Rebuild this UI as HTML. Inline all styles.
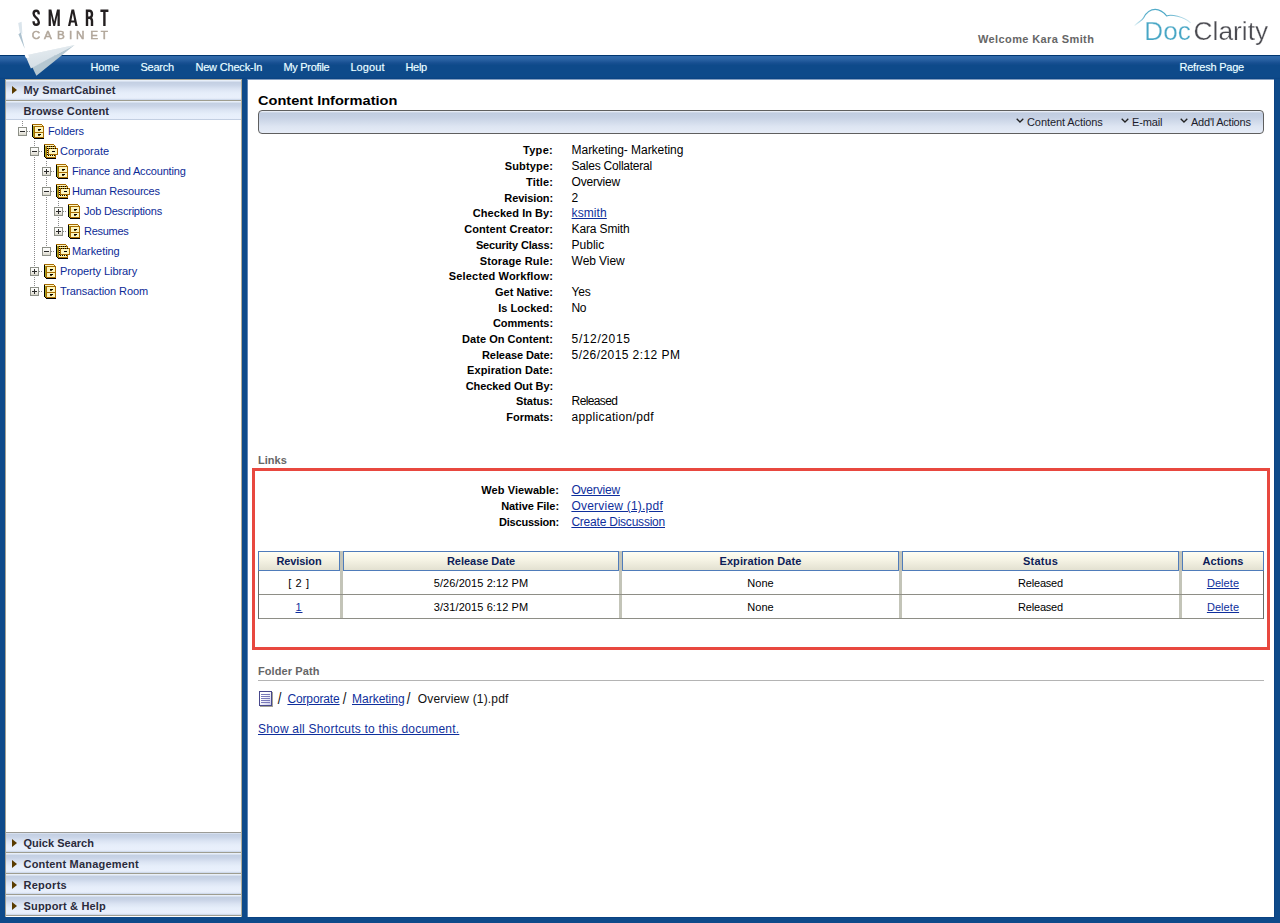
<!DOCTYPE html>
<html>
<head>
<meta charset="utf-8">
<title>Content Information</title>
<style>
*{box-sizing:border-box;margin:0;padding:0}
html,body{width:1280px;height:923px;overflow:hidden;background:#0e4a8a;font-family:"Liberation Sans",sans-serif;font-size:11px;color:#000}
a{color:#0f2f9c;text-decoration:underline}
.abs{position:absolute}
span{white-space:nowrap}
#top{position:absolute;left:0;top:0;width:1280px;height:55px;background:#fff}
#nav{position:absolute;left:0;top:55px;width:1280px;height:24px;background:linear-gradient(#003670 0,#003670 1px,#326bab 1px,#2c65a5 4px,#174f91 8px,#0e4a8a 10.5px,#0e4a8a 22px,#0a4383 24px)}
#nav b{position:absolute;top:5px;font-weight:normal;color:#f0ffff;font-size:11px;line-height:14px;white-space:nowrap;text-shadow:0 0 1px rgba(150,220,255,.6)}
#welcome{position:absolute;left:978px;top:32px;font-weight:bold;font-size:11px;line-height:14px;color:#666;white-space:nowrap}
/* sidebar */
#side{position:absolute;left:5px;top:79px;width:237px;height:838px;background:#fff;border-left:1px solid #a3a193;border-top:1px solid #a9a695;border-right:1px solid #b0ab98}
.hd{position:absolute;left:0;width:235px;height:21px;border-top:1px solid #e8eff9;border-bottom:1px solid #9e9d90;background:linear-gradient(#e0e8f5 0,#c4d0e3 1.5px,#c9d4e7 4px,#dbe4f3 8px,#e6eefa 12px,#e9f0fc 16px,#e7eefa 17.4px,#d0dbed 18px,#d0dbed 19px);font-weight:bold;font-size:11px;line-height:18px;color:#2b2b3b;padding-left:17.5px;white-space:nowrap}
.hd i{position:absolute;left:6px;top:4.7px;width:0;height:0;border-left:5.3px solid #5a3c00;border-top:4.8px solid transparent;border-bottom:4.8px solid transparent}
/* tree */
#tree{position:absolute;left:0;top:41px;width:236px;height:200px}
.tr{position:absolute;left:0;height:20px;width:236px}
.tr .bx{position:absolute;top:5px;width:9px;height:9px;border:1px solid #8d9088;background:linear-gradient(#ffffff,#f4f3ee 50%,#d9d7cb)}
.tr .bx:before{content:"";position:absolute;left:1px;top:3px;width:5px;height:1px;background:#2a2a2a}
.tr .bx.p:after{content:"";position:absolute;left:3px;top:1px;width:1px;height:5px;background:#2a2a2a}
.tr .hl{position:absolute;top:9px;width:3px;height:1px;background:repeating-linear-gradient(90deg,#8a8a8a 0,#8a8a8a 1px,#fff 1px,#fff 2px)}
.tr svg{position:absolute;top:2px}
.tr .tx{position:absolute;top:2px;font-size:11px;line-height:14px;color:#0c2a96;white-space:nowrap}
.vl{position:absolute;width:1px;background:repeating-linear-gradient(180deg,#8a8a8a 0,#8a8a8a 1px,#fff 1px,#fff 2px)}
/* content */
#main{position:absolute;left:248px;top:79px;width:1026px;height:838px;background:#fff;border-top:1px solid #869fc0;box-shadow:-1px 0 0 #5f86b4,1px 1px 0 #0b4282}
h1{position:absolute;left:10px;top:13px;font-size:13px;line-height:16px;font-weight:bold;color:#000;white-space:nowrap}
#tb{position:absolute;left:10px;top:30px;width:1006px;height:24px;border:1px solid #5f5f5f;border-radius:4px;background:linear-gradient(#f4f7fc 0,#c0cce0 2px,#c6d1e4 30%,#dde5f2 70%,#e6ecf7 100%)}
#tb b{position:absolute;top:4px;font-weight:normal;font-size:11px;line-height:14px;color:#1c1c2c;white-space:nowrap}
#tb svg{position:absolute;top:7px}
/* info rows */
.ir{position:absolute;left:0;height:16px;line-height:16px;white-space:nowrap}
.ir .l{display:inline-block;width:305px;text-align:right;font-weight:bold;font-size:11px;color:#000;vertical-align:baseline}
.ir .v{margin-left:18.6px;font-size:12px;color:#000}
.sec{position:absolute;left:10px;font-weight:bold;font-size:11px;line-height:14px;color:#666}
#red{position:absolute;left:4px;top:388px;width:1018px;height:182px;border:3px solid #e8483f}
/* rev table */
#rev{position:absolute;left:10px;top:471px;width:1006px;height:68px;background:#fff}
#rev .th{position:absolute;top:0;height:20px;border:1px solid #4f7cba;background:linear-gradient(#fffef3 0,#f5f3e4 45%,#e3e1d1 100%);font-size:11px;line-height:18px;font-weight:bold;color:#0c1c58;text-align:center}
#rev .vs{position:absolute;top:0;width:3px;height:68px;background:#c3c4b8}
#rev .hs{position:absolute;left:0;width:1006px;height:1px;background:#8e8e86}
#rev .td{position:absolute;height:23px;font-size:11px;line-height:23px;text-align:center;color:#000}
</style>
</head>
<body>
<div id="top">
<svg class="abs" style="left:0;top:0;will-change:transform" width="130" height="55" viewBox="0 0 130 55">
<g fill="none" stroke="#231f20" stroke-width="2.4">
<path d="M38.7 14.4 C38.8 11.7 37.9 10.7 36.1 10.7 C34.4 10.7 33.6 11.7 33.6 13.5 C33.6 15.6 34.9 16.6 36.2 17.7 C37.8 19 38.8 20.1 38.8 22.2 C38.8 24 37.9 24.8 36.2 24.8 C34.4 24.8 33.5 23.9 33.6 21.2"/>
<path d="M87 26 V9.5 M87 10.7 H89.3 C91.2 10.7 92 11.7 92 14.2 C92 16.8 91.2 17.8 89.3 17.8 H87 M89.8 17.8 C91.5 18.2 92 19.2 92 21 V26"/>
<path d="M100.4 10.7 H108.4 M104.4 10.7 V26"/>
</g>
<g fill="#231f20" fill-rule="evenodd">
<path d="M48.6 26 V9.5 H51.4 L54.2 21.5 L57 9.5 H59.8 V26 H57.5 V15 L55.1 26 H53.3 L50.9 15 V26 Z"/>
<path d="M68 26 L71.5 9.5 H74.1 L77.6 26 H75.3 L74.6 22.6 H71 L70.3 26 Z M72.8 13.2 L71.4 20.6 H74.2 Z"/>
</g>
<text font-family="Liberation Sans" font-size="11.7" fill="#b1a69a" y="38.7" x="31.8 44.1 56.9 68.9 75.9 90.2 100.8" stroke="#b1a69a" stroke-width="0.5">CABINET</text>
<polygon points="18.2,22.9 21.6,21.7 22.4,34 19.8,32.8" fill="#dbe5ec"/>
<polygon points="18.4,34.2 20.8,32.6 24.8,48.8" fill="#adc2cf"/>
<polygon points="74.6,45 25.3,55.4 30.9,68.4" fill="#e4ebef"/>
</svg>
<svg class="abs" style="left:1125px;top:0;will-change:transform" width="155" height="55" viewBox="1125 0 155 55">
<defs><linearGradient id="cg" x1="0" x2="1" y1="0" y2="0"><stop offset="0" stop-color="#5fb4cf" stop-opacity="0.15"/><stop offset="0.18" stop-color="#4aa7c6" stop-opacity="0.9"/><stop offset="0.55" stop-color="#4aa7c6" stop-opacity="1"/><stop offset="1" stop-color="#4aa7c6" stop-opacity="0.25"/></linearGradient></defs>
<path d="M1134.5 25.6 C1139 21.5 1142 20.8 1143.6 17.8 C1146.5 12.2 1151 9.4 1155.3 9.4 C1160 9.5 1163.8 12.5 1166.6 15.9 C1169.8 14.8 1173 15.2 1177.5 16.2 C1182.5 17.4 1187 19.5 1190.6 22.8" fill="none" stroke="url(#cg)" stroke-width="1.1"/>
<text font-family="Liberation Sans" font-size="25.2" y="40.1" x="1144.3" fill="#47a6c5" stroke="#fff" stroke-width="0.25" textLength="46.4" lengthAdjust="spacingAndGlyphs">Doc</text>
<text font-family="Liberation Sans" font-size="25.2" y="40.1" x="1193.6" fill="#4b4b51" stroke="#fff" stroke-width="0.25" textLength="74.6" lengthAdjust="spacingAndGlyphs">Clarity</text>
</svg>

</div>
<div id="nav">
<b style="left:90.4px"><span style="letter-spacing:-0.14px">Home</span></b>
<b style="left:140.4px"><span style="letter-spacing:-0.21px">Search</span></b>
<b style="left:195.4px"><span style="letter-spacing:-0.18px">New Check-In</span></b>
<b style="left:283.4px"><span style="letter-spacing:-0.29px">My Profile</span></b>
<b style="left:350.4px"><span style="letter-spacing:0.09px">Logout</span></b>
<b style="left:405.4px"><span style="letter-spacing:-0.26px">Help</span></b>
<b style="left:1179.5px"><span style="letter-spacing:-0.23px">Refresh Page</span></b>
</div>
<svg class="abs" style="left:0;top:40px" width="100" height="40" viewBox="0 40 100 40">
<defs><linearGradient id="pg" x1="0" y1="0" x2="0.35" y2="1"><stop offset="0" stop-color="#e9eff3"/><stop offset="1" stop-color="#d3dde4"/></linearGradient></defs>
<polygon points="74.6,45 32.2,67.0 36.4,75.7" fill="#b5c7d1"/>
<polygon points="74.6,45 25.3,55.4 30.9,68.4" fill="url(#pg)"/>
<polygon points="24.6,55 28.2,55 29.2,57.6 26,58" fill="#fff"/>
</svg>

<div id="welcome"><span style="letter-spacing:0.39px">Welcome Kara Smith</span></div>

<div id="side">
<div class="hd" style="top:0"><i></i><span style="letter-spacing:0.14px">My SmartCabinet</span></div>
<div class="hd" style="top:21px;height:19px;border-bottom-color:#c3cfe2;line-height:19px"><span style="letter-spacing:0.08px">Browse Content</span></div>
<div id="tree">
<div class="vl" style="left:16px;top:0px;height:6px"></div><div class="vl" style="left:28px;top:20px;height:6px"></div><div class="vl" style="left:28px;top:36px;height:110px"></div><div class="vl" style="left:28px;top:156px;height:10px"></div><div class="vl" style="left:40px;top:40px;height:6px"></div><div class="vl" style="left:40px;top:56px;height:10px"></div><div class="vl" style="left:40px;top:76px;height:50px"></div><div class="vl" style="left:52px;top:80px;height:6px"></div><div class="vl" style="left:52px;top:96px;height:10px"></div>
<div class="tr" style="top:1px"><div class="bx" style="left:12px"></div><div class="hl" style="left:21px"></div><svg style="left:26px" width="12" height="15" viewBox="0 0 12 15" shape-rendering="crispEdges"><rect x="0" y="0" width="10" height="1" fill="#a86c00"/><rect x="1" y="1" width="9" height="1" fill="#fdf6c0"/><rect x="10" y="1" width="1" height="1" fill="#a86c00"/><rect x="0" y="1" width="1" height="12" fill="#000"/><rect x="1" y="2" width="1" height="12" fill="#a5a51c"/><rect x="1" y="13" width="1" height="1" fill="#000"/><rect x="2" y="2" width="10" height="12" fill="#a86c00"/><rect x="3" y="3" width="8" height="5" fill="#fdf5bc"/><rect x="3" y="9" width="8" height="4" fill="#fdf5bc"/><rect x="6" y="5" width="3" height="1" fill="#000"/><rect x="6" y="6" width="2" height="1" fill="#5a4a20"/><rect x="6" y="10" width="3" height="1" fill="#000"/><rect x="6" y="11" width="2" height="1" fill="#5a4a20"/><rect x="2" y="14" width="10" height="1" fill="#000"/></svg><div class="tx" style="left:42px"><span style="letter-spacing:-0.10px">Folders</span></div></div>
<div class="tr" style="top:21px"><div class="bx" style="left:24px"></div><div class="hl" style="left:33px"></div><svg style="left:38px" width="14" height="15" viewBox="0 0 14 15" shape-rendering="crispEdges"><rect x="0" y="0" width="10" height="1" fill="#a86c00"/><rect x="1" y="1" width="9" height="1" fill="#fdf6c0"/><rect x="10" y="1" width="1" height="1" fill="#a86c00"/><rect x="0" y="1" width="1" height="12" fill="#000"/><rect x="1" y="2" width="1" height="12" fill="#a5a51c"/><rect x="1" y="13" width="1" height="1" fill="#000"/><rect x="2" y="2" width="10" height="12" fill="#a86c00"/><rect x="3" y="3" width="8" height="10" fill="#fbf3a8"/><g fill="#000"><rect x="3" y="2" width="1" height="1"/><rect x="5" y="2" width="1" height="1"/><rect x="7" y="2" width="1" height="1"/><rect x="9" y="2" width="1" height="1"/><rect x="3" y="4" width="1" height="1"/><rect x="3" y="6" width="1" height="1"/><rect x="3" y="8" width="1" height="1"/><rect x="3" y="10" width="1" height="1"/><rect x="4" y="11" width="1" height="1"/><rect x="6" y="11" width="1" height="1"/><rect x="8" y="11" width="1" height="1"/><rect x="10" y="11" width="1" height="1"/><rect x="5" y="4" width="1" height="1"/><rect x="7" y="4" width="1" height="1"/><rect x="9" y="4" width="1" height="1"/><rect x="11" y="4" width="1" height="1"/></g><rect x="4" y="4" width="10" height="7" fill="none"/><path d="M4 4h10v7h-10z M5 5v5h8v-5z" fill="#a86c00" fill-rule="evenodd"/><g fill="#000"><rect x="5" y="4" width="1" height="1"/><rect x="7" y="4" width="1" height="1"/><rect x="9" y="4" width="1" height="1"/><rect x="11" y="4" width="1" height="1"/></g><rect x="5" y="5" width="8" height="5" fill="#fdf5bc"/><rect x="8" y="7" width="3" height="1" fill="#000"/><rect x="2" y="14" width="10" height="1" fill="#000"/></svg><div class="tx" style="left:54px"><span style="letter-spacing:0.02px">Corporate</span></div></div>
<div class="tr" style="top:41px"><div class="bx p" style="left:36px"></div><div class="hl" style="left:45px"></div><svg style="left:50px" width="12" height="15" viewBox="0 0 12 15" shape-rendering="crispEdges"><rect x="0" y="0" width="10" height="1" fill="#a86c00"/><rect x="1" y="1" width="9" height="1" fill="#fdf6c0"/><rect x="10" y="1" width="1" height="1" fill="#a86c00"/><rect x="0" y="1" width="1" height="12" fill="#000"/><rect x="1" y="2" width="1" height="12" fill="#a5a51c"/><rect x="1" y="13" width="1" height="1" fill="#000"/><rect x="2" y="2" width="10" height="12" fill="#a86c00"/><rect x="3" y="3" width="8" height="5" fill="#fdf5bc"/><rect x="3" y="9" width="8" height="4" fill="#fdf5bc"/><rect x="6" y="5" width="3" height="1" fill="#000"/><rect x="6" y="6" width="2" height="1" fill="#5a4a20"/><rect x="6" y="10" width="3" height="1" fill="#000"/><rect x="6" y="11" width="2" height="1" fill="#5a4a20"/><rect x="2" y="14" width="10" height="1" fill="#000"/></svg><div class="tx" style="left:66px"><span style="letter-spacing:-0.17px">Finance and Accounting</span></div></div>
<div class="tr" style="top:61px"><div class="bx" style="left:36px"></div><div class="hl" style="left:45px"></div><svg style="left:50px" width="14" height="15" viewBox="0 0 14 15" shape-rendering="crispEdges"><rect x="0" y="0" width="10" height="1" fill="#a86c00"/><rect x="1" y="1" width="9" height="1" fill="#fdf6c0"/><rect x="10" y="1" width="1" height="1" fill="#a86c00"/><rect x="0" y="1" width="1" height="12" fill="#000"/><rect x="1" y="2" width="1" height="12" fill="#a5a51c"/><rect x="1" y="13" width="1" height="1" fill="#000"/><rect x="2" y="2" width="10" height="12" fill="#a86c00"/><rect x="3" y="3" width="8" height="10" fill="#fbf3a8"/><g fill="#000"><rect x="3" y="2" width="1" height="1"/><rect x="5" y="2" width="1" height="1"/><rect x="7" y="2" width="1" height="1"/><rect x="9" y="2" width="1" height="1"/><rect x="3" y="4" width="1" height="1"/><rect x="3" y="6" width="1" height="1"/><rect x="3" y="8" width="1" height="1"/><rect x="3" y="10" width="1" height="1"/><rect x="4" y="11" width="1" height="1"/><rect x="6" y="11" width="1" height="1"/><rect x="8" y="11" width="1" height="1"/><rect x="10" y="11" width="1" height="1"/><rect x="5" y="4" width="1" height="1"/><rect x="7" y="4" width="1" height="1"/><rect x="9" y="4" width="1" height="1"/><rect x="11" y="4" width="1" height="1"/></g><rect x="4" y="4" width="10" height="7" fill="none"/><path d="M4 4h10v7h-10z M5 5v5h8v-5z" fill="#a86c00" fill-rule="evenodd"/><g fill="#000"><rect x="5" y="4" width="1" height="1"/><rect x="7" y="4" width="1" height="1"/><rect x="9" y="4" width="1" height="1"/><rect x="11" y="4" width="1" height="1"/></g><rect x="5" y="5" width="8" height="5" fill="#fdf5bc"/><rect x="8" y="7" width="3" height="1" fill="#000"/><rect x="2" y="14" width="10" height="1" fill="#000"/></svg><div class="tx" style="left:66px"><span style="letter-spacing:-0.22px">Human Resources</span></div></div>
<div class="tr" style="top:81px"><div class="bx p" style="left:48px"></div><div class="hl" style="left:57px"></div><svg style="left:62px" width="12" height="15" viewBox="0 0 12 15" shape-rendering="crispEdges"><rect x="0" y="0" width="10" height="1" fill="#a86c00"/><rect x="1" y="1" width="9" height="1" fill="#fdf6c0"/><rect x="10" y="1" width="1" height="1" fill="#a86c00"/><rect x="0" y="1" width="1" height="12" fill="#000"/><rect x="1" y="2" width="1" height="12" fill="#a5a51c"/><rect x="1" y="13" width="1" height="1" fill="#000"/><rect x="2" y="2" width="10" height="12" fill="#a86c00"/><rect x="3" y="3" width="8" height="5" fill="#fdf5bc"/><rect x="3" y="9" width="8" height="4" fill="#fdf5bc"/><rect x="6" y="5" width="3" height="1" fill="#000"/><rect x="6" y="6" width="2" height="1" fill="#5a4a20"/><rect x="6" y="10" width="3" height="1" fill="#000"/><rect x="6" y="11" width="2" height="1" fill="#5a4a20"/><rect x="2" y="14" width="10" height="1" fill="#000"/></svg><div class="tx" style="left:78px"><span style="letter-spacing:-0.21px">Job Descriptions</span></div></div>
<div class="tr" style="top:101px"><div class="bx p" style="left:48px"></div><div class="hl" style="left:57px"></div><svg style="left:62px" width="12" height="15" viewBox="0 0 12 15" shape-rendering="crispEdges"><rect x="0" y="0" width="10" height="1" fill="#a86c00"/><rect x="1" y="1" width="9" height="1" fill="#fdf6c0"/><rect x="10" y="1" width="1" height="1" fill="#a86c00"/><rect x="0" y="1" width="1" height="12" fill="#000"/><rect x="1" y="2" width="1" height="12" fill="#a5a51c"/><rect x="1" y="13" width="1" height="1" fill="#000"/><rect x="2" y="2" width="10" height="12" fill="#a86c00"/><rect x="3" y="3" width="8" height="5" fill="#fdf5bc"/><rect x="3" y="9" width="8" height="4" fill="#fdf5bc"/><rect x="6" y="5" width="3" height="1" fill="#000"/><rect x="6" y="6" width="2" height="1" fill="#5a4a20"/><rect x="6" y="10" width="3" height="1" fill="#000"/><rect x="6" y="11" width="2" height="1" fill="#5a4a20"/><rect x="2" y="14" width="10" height="1" fill="#000"/></svg><div class="tx" style="left:78px"><span style="letter-spacing:-0.28px">Resumes</span></div></div>
<div class="tr" style="top:121px"><div class="bx" style="left:36px"></div><div class="hl" style="left:45px"></div><svg style="left:50px" width="14" height="15" viewBox="0 0 14 15" shape-rendering="crispEdges"><rect x="0" y="0" width="10" height="1" fill="#a86c00"/><rect x="1" y="1" width="9" height="1" fill="#fdf6c0"/><rect x="10" y="1" width="1" height="1" fill="#a86c00"/><rect x="0" y="1" width="1" height="12" fill="#000"/><rect x="1" y="2" width="1" height="12" fill="#a5a51c"/><rect x="1" y="13" width="1" height="1" fill="#000"/><rect x="2" y="2" width="10" height="12" fill="#a86c00"/><rect x="3" y="3" width="8" height="10" fill="#fbf3a8"/><g fill="#000"><rect x="3" y="2" width="1" height="1"/><rect x="5" y="2" width="1" height="1"/><rect x="7" y="2" width="1" height="1"/><rect x="9" y="2" width="1" height="1"/><rect x="3" y="4" width="1" height="1"/><rect x="3" y="6" width="1" height="1"/><rect x="3" y="8" width="1" height="1"/><rect x="3" y="10" width="1" height="1"/><rect x="4" y="11" width="1" height="1"/><rect x="6" y="11" width="1" height="1"/><rect x="8" y="11" width="1" height="1"/><rect x="10" y="11" width="1" height="1"/><rect x="5" y="4" width="1" height="1"/><rect x="7" y="4" width="1" height="1"/><rect x="9" y="4" width="1" height="1"/><rect x="11" y="4" width="1" height="1"/></g><rect x="4" y="4" width="10" height="7" fill="none"/><path d="M4 4h10v7h-10z M5 5v5h8v-5z" fill="#a86c00" fill-rule="evenodd"/><g fill="#000"><rect x="5" y="4" width="1" height="1"/><rect x="7" y="4" width="1" height="1"/><rect x="9" y="4" width="1" height="1"/><rect x="11" y="4" width="1" height="1"/></g><rect x="5" y="5" width="8" height="5" fill="#fdf5bc"/><rect x="8" y="7" width="3" height="1" fill="#000"/><rect x="2" y="14" width="10" height="1" fill="#000"/></svg><div class="tx" style="left:66px"><span style="letter-spacing:-0.08px">Marketing</span></div></div>
<div class="tr" style="top:141px"><div class="bx p" style="left:24px"></div><div class="hl" style="left:33px"></div><svg style="left:38px" width="12" height="15" viewBox="0 0 12 15" shape-rendering="crispEdges"><rect x="0" y="0" width="10" height="1" fill="#a86c00"/><rect x="1" y="1" width="9" height="1" fill="#fdf6c0"/><rect x="10" y="1" width="1" height="1" fill="#a86c00"/><rect x="0" y="1" width="1" height="12" fill="#000"/><rect x="1" y="2" width="1" height="12" fill="#a5a51c"/><rect x="1" y="13" width="1" height="1" fill="#000"/><rect x="2" y="2" width="10" height="12" fill="#a86c00"/><rect x="3" y="3" width="8" height="5" fill="#fdf5bc"/><rect x="3" y="9" width="8" height="4" fill="#fdf5bc"/><rect x="6" y="5" width="3" height="1" fill="#000"/><rect x="6" y="6" width="2" height="1" fill="#5a4a20"/><rect x="6" y="10" width="3" height="1" fill="#000"/><rect x="6" y="11" width="2" height="1" fill="#5a4a20"/><rect x="2" y="14" width="10" height="1" fill="#000"/></svg><div class="tx" style="left:54px"><span style="letter-spacing:-0.07px">Property Library</span></div></div>
<div class="tr" style="top:161px"><div class="bx p" style="left:24px"></div><div class="hl" style="left:33px"></div><svg style="left:38px" width="12" height="15" viewBox="0 0 12 15" shape-rendering="crispEdges"><rect x="0" y="0" width="10" height="1" fill="#a86c00"/><rect x="1" y="1" width="9" height="1" fill="#fdf6c0"/><rect x="10" y="1" width="1" height="1" fill="#a86c00"/><rect x="0" y="1" width="1" height="12" fill="#000"/><rect x="1" y="2" width="1" height="12" fill="#a5a51c"/><rect x="1" y="13" width="1" height="1" fill="#000"/><rect x="2" y="2" width="10" height="12" fill="#a86c00"/><rect x="3" y="3" width="8" height="5" fill="#fdf5bc"/><rect x="3" y="9" width="8" height="4" fill="#fdf5bc"/><rect x="6" y="5" width="3" height="1" fill="#000"/><rect x="6" y="6" width="2" height="1" fill="#5a4a20"/><rect x="6" y="10" width="3" height="1" fill="#000"/><rect x="6" y="11" width="2" height="1" fill="#5a4a20"/><rect x="2" y="14" width="10" height="1" fill="#000"/></svg><div class="tx" style="left:54px"><span style="letter-spacing:-0.09px">Transaction Room</span></div></div>

</div>
<div class="hd" style="top:752px;border-top:1px solid #9b9b96;line-height:20px"><i style="top:5.7px"></i><span style="letter-spacing:0.01px">Quick Search</span></div>
<div class="hd" style="top:773px;line-height:20px"><i style="top:5.7px"></i><span style="letter-spacing:0.19px">Content Management</span></div>
<div class="hd" style="top:794px;line-height:20px"><i style="top:5.7px"></i><span style="letter-spacing:0.28px">Reports</span></div>
<div class="hd" style="top:815px;line-height:20px"><i style="top:5.7px"></i><span style="letter-spacing:0.17px">Support &amp; Help</span></div>
</div>

<div id="main">
<h1><span style="display:inline-block;transform:scaleX(1.122);transform-origin:0 0">Content Information</span></h1>
<div id="tb">
<svg style="left:757px" width="8" height="6" viewBox="0 0 8 6"><path d="M0.7 0.7 L4 4 L7.3 0.7" fill="none" stroke="#222" stroke-width="1.3"/></svg>
<b style="left:768px"><span style="letter-spacing:-0.09px">Content Actions</span></b>
<svg style="left:862px" width="8" height="6" viewBox="0 0 8 6"><path d="M0.7 0.7 L4 4 L7.3 0.7" fill="none" stroke="#222" stroke-width="1.3"/></svg>
<b style="left:873px"><span style="letter-spacing:-0.13px">E-mail</span></b>
<svg style="left:921px" width="8" height="6" viewBox="0 0 8 6"><path d="M0.7 0.7 L4 4 L7.3 0.7" fill="none" stroke="#222" stroke-width="1.3"/></svg>
<b style="left:932px"><span style="letter-spacing:-0.23px">Add'l Actions</span></b>
</div>
<div class="ir" style="top:62px"><span class="l"><span style="letter-spacing:0.29px">Type:</span></span><span class="v"><span style="letter-spacing:-0.05px">Marketing- Marketing</span></span></div>
<div class="ir" style="top:78px"><span class="l"><span style="letter-spacing:0.15px">Subtype:</span></span><span class="v"><span style="letter-spacing:-0.23px">Sales Collateral</span></span></div>
<div class="ir" style="top:94px"><span class="l"><span style="letter-spacing:0.15px">Title:</span></span><span class="v"><span style="letter-spacing:-0.20px">Overview</span></span></div>
<div class="ir" style="top:110px"><span class="l"><span style="letter-spacing:-0.09px">Revision:</span></span><span class="v"><span style="letter-spacing:0.31px">2</span></span></div>
<div class="ir" style="top:125px"><span class="l"><span style="letter-spacing:0.05px">Checked In By:</span></span><span class="v"><a><span style="letter-spacing:0.09px">ksmith</span></a></span></div>
<div class="ir" style="top:141px"><span class="l"><span style="letter-spacing:0.09px">Content Creator:</span></span><span class="v"><span style="letter-spacing:-0.15px">Kara Smith</span></span></div>
<div class="ir" style="top:157px"><span class="l"><span style="letter-spacing:-0.16px">Security Class:</span></span><span class="v"><span style="letter-spacing:0.00px">Public</span></span></div>
<div class="ir" style="top:173px"><span class="l"><span style="letter-spacing:0.14px">Storage Rule:</span></span><span class="v"><span style="letter-spacing:-0.07px">Web View</span></span></div>
<div class="ir" style="top:188px"><span class="l"><span style="letter-spacing:0.16px">Selected Workflow:</span></span><span class="v"></span></div>
<div class="ir" style="top:204px"><span class="l"><span style="letter-spacing:-0.01px">Get Native:</span></span><span class="v"><span style="letter-spacing:-0.23px">Yes</span></span></div>
<div class="ir" style="top:220px"><span class="l"><span style="letter-spacing:0.04px">Is Locked:</span></span><span class="v"><span style="letter-spacing:-0.47px">No</span></span></div>
<div class="ir" style="top:235px"><span class="l"><span style="letter-spacing:-0.05px">Comments:</span></span><span class="v"></span></div>
<div class="ir" style="top:251px"><span class="l"><span style="letter-spacing:0.03px">Date On Content:</span></span><span class="v"><span style="letter-spacing:0.61px">5/12/2015</span></span></div>
<div class="ir" style="top:267px"><span class="l"><span style="letter-spacing:-0.09px">Release Date:</span></span><span class="v"><span style="letter-spacing:0.43px">5/26/2015 2:12 PM</span></span></div>
<div class="ir" style="top:282px"><span class="l"><span style="letter-spacing:0.10px">Expiration Date:</span></span><span class="v"></span></div>
<div class="ir" style="top:298px"><span class="l"><span style="letter-spacing:-0.09px">Checked Out By:</span></span><span class="v"></span></div>
<div class="ir" style="top:313px"><span class="l"><span style="letter-spacing:-0.03px">Status:</span></span><span class="v"><span style="letter-spacing:-0.63px">Released</span></span></div>
<div class="ir" style="top:329px"><span class="l"><span style="letter-spacing:-0.05px">Formats:</span></span><span class="v"><span style="letter-spacing:0.33px">application/pdf</span></span></div>
<div class="sec" style="top:373px"><span style="letter-spacing:0.03px">Links</span></div>
<div id="red"></div>
<div class="ir" style="top:402px"><span class="l" style="width:311px"><span style="letter-spacing:0.08px">Web Viewable:</span></span><span class="v" style="margin-left:12.4px"><a><span style="letter-spacing:-0.19px">Overview</span></a></span></div>
<div class="ir" style="top:418px"><span class="l" style="width:311px"><span style="letter-spacing:-0.07px">Native File:</span></span><span class="v" style="margin-left:12.4px"><a><span style="letter-spacing:0.22px">Overview (1).pdf</span></a></span></div>
<div class="ir" style="top:434px"><span class="l" style="width:311px"><span style="letter-spacing:-0.22px">Discussion:</span></span><span class="v" style="margin-left:12.4px"><a><span style="letter-spacing:-0.22px">Create Discussion</span></a></span></div>
<div id="rev">
<div class="vs" style="left:82px"></div><div class="vs" style="left:361px"></div><div class="vs" style="left:641px"></div><div class="vs" style="left:921px"></div>
<div class="hs" style="top:43px"></div><div class="hs" style="top:67px"></div>
<div class="abs" style="left:0;top:0;width:1px;height:68px;background:#686c68"></div><div class="abs" style="left:1005px;top:0;width:1px;height:68px;background:#686c68"></div>
<div class="th" style="left:0px;width:82px"><span style="letter-spacing:-0.08px">Revision</span></div><div class="th" style="left:85px;width:276px"><span style="letter-spacing:-0.02px">Release Date</span></div><div class="th" style="left:364px;width:277px"><span style="letter-spacing:0.09px">Expiration Date</span></div><div class="th" style="left:644px;width:277px"><span style="letter-spacing:0.25px">Status</span></div><div class="th" style="left:924px;width:82px"><span style="letter-spacing:0.11px">Actions</span></div>
<div class="td" style="left:0px;top:21px;width:82px"><span style="letter-spacing:0.63px">[ 2 ]</span></div><div class="td" style="left:85px;top:21px;width:276px"><span style="letter-spacing:0.09px">5/26/2015 2:12 PM</span></div><div class="td" style="left:364px;top:21px;width:277px"><span style="letter-spacing:0.05px">None</span></div><div class="td" style="left:644px;top:21px;width:277px"><span style="letter-spacing:-0.21px">Released</span></div><div class="td" style="left:924px;top:21px;width:82px"><a><span style="letter-spacing:0.07px">Delete</span></a></div>
<div class="td" style="left:0px;top:45px;width:82px"><a><span style="letter-spacing:0.88px">1</span></a></div><div class="td" style="left:85px;top:45px;width:276px"><span style="letter-spacing:0.09px">3/31/2015 6:12 PM</span></div><div class="td" style="left:364px;top:45px;width:277px"><span style="letter-spacing:0.05px">None</span></div><div class="td" style="left:644px;top:45px;width:277px"><span style="letter-spacing:-0.21px">Released</span></div><div class="td" style="left:924px;top:45px;width:82px"><a><span style="letter-spacing:0.07px">Delete</span></a></div>
</div>
<div class="sec" style="top:584px"><span style="letter-spacing:0.09px">Folder Path</span></div>
<div class="abs" style="left:10px;top:600px;width:1006px;height:1px;background:#b4b4b4"></div>
<svg class="abs" style="left:11px;top:611px" width="15" height="17" viewBox="0 0 15 17" shape-rendering="crispEdges"><defs><linearGradient id="dg" x1="0" y1="0" x2="1" y2="1"><stop offset="0.35" stop-color="#fff"/><stop offset="1" stop-color="#c6c6e8"/></linearGradient></defs><rect x="1" y="15" width="13" height="1" fill="#a3a396"/><rect x="13" y="1" width="1" height="15" fill="#a3a396"/><rect x="0.5" y="0.5" width="12" height="14" fill="url(#dg)" stroke="#48488c"/><g fill="#7a7aba"><rect x="2" y="3" width="9" height="1"/><rect x="2" y="5" width="9" height="1"/><rect x="2" y="7" width="9" height="1"/><rect x="2" y="9" width="9" height="1"/><rect x="2" y="11" width="9" height="1"/></g></svg>

<div class="abs" style="left:30px;top:611px;font-size:12px;line-height:16px;color:#111;white-space:nowrap"><span style="display:inline-block;transform:scale(1.1,1.33);transform-origin:50% 62%">/</span></div><div class="abs" style="left:39.4px;top:611px;font-size:12px;line-height:16px;color:#111;white-space:nowrap"><a><span style="letter-spacing:-0.13px">Corporate</span></a></div><div class="abs" style="left:95px;top:611px;font-size:12px;line-height:16px;color:#111;white-space:nowrap"><span style="display:inline-block;transform:scale(1.1,1.33);transform-origin:50% 62%">/</span></div><div class="abs" style="left:104px;top:611px;font-size:12px;line-height:16px;color:#111;white-space:nowrap"><a><span style="letter-spacing:-0.01px">Marketing</span></a></div><div class="abs" style="left:159.3px;top:611px;font-size:12px;line-height:16px;color:#111;white-space:nowrap"><span style="display:inline-block;transform:scale(1.1,1.33);transform-origin:50% 62%">/</span></div><div class="abs" style="left:169.8px;top:611px;font-size:12px;line-height:16px;color:#111;white-space:nowrap"><span style="letter-spacing:0.17px">Overview (1).pdf</span></div>
<div class="abs" id="sh" style="left:10px;top:641px;font-size:12px;line-height:16px;white-space:nowrap"><a><span style="letter-spacing:0.20px">Show all Shortcuts to this document.</span></a></div>

</div>
</body>
</html>
